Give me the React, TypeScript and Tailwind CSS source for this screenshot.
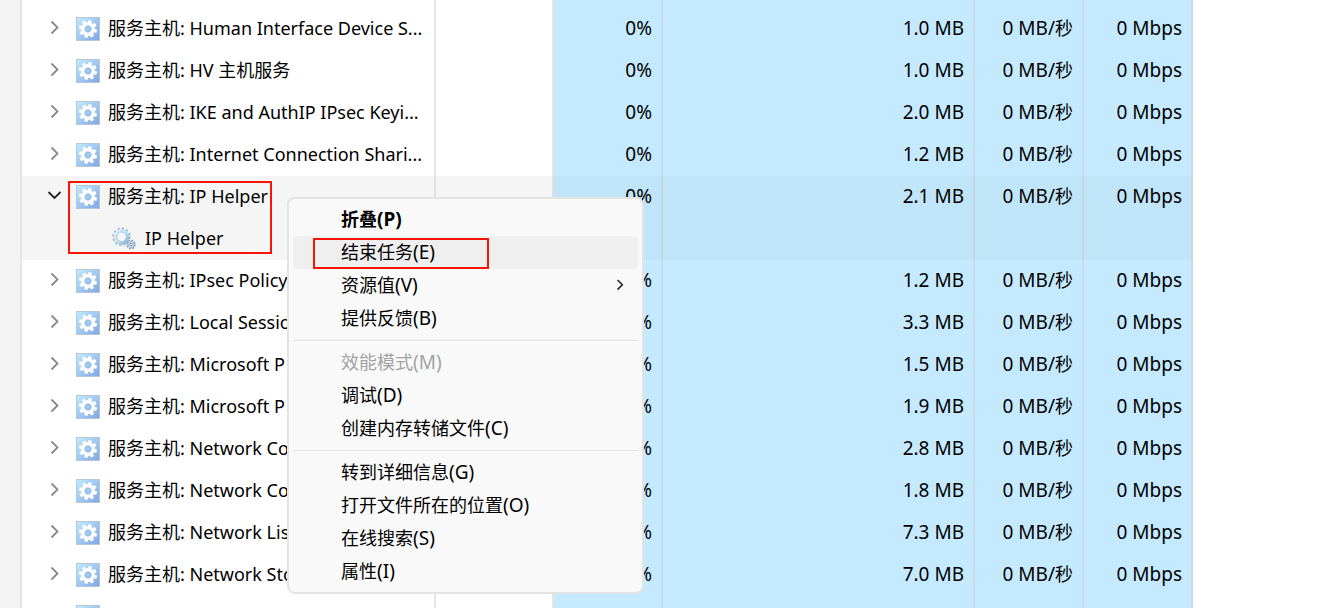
import { Fragment } from "react";
import type { ReactNode } from "react";

type Service = {
  name: string;
  memory: string;
  child?: string;
};

type MenuItem = {
  label: string;
  bold?: boolean;
  disabled?: boolean;
  active?: boolean;
  submenu?: boolean;
};

const services: Service[] = [
  { name: "服务主机: Human Interface Device S...", memory: "1.0 MB" },
  { name: "服务主机: HV 主机服务", memory: "1.0 MB" },
  { name: "服务主机: IKE and AuthIP IPsec Keyi...", memory: "2.0 MB" },
  { name: "服务主机: Internet Connection Shari...", memory: "1.2 MB" },
  { name: "服务主机: IP Helper", memory: "2.1 MB", child: "IP Helper" },
  { name: "服务主机: IPsec Policy", memory: "1.2 MB" },
  { name: "服务主机: Local Sessio", memory: "3.3 MB" },
  { name: "服务主机: Microsoft P", memory: "1.5 MB" },
  { name: "服务主机: Microsoft P", memory: "1.9 MB" },
  { name: "服务主机: Network Co", memory: "2.8 MB" },
  { name: "服务主机: Network Co", memory: "1.8 MB" },
  { name: "服务主机: Network Lis", memory: "7.3 MB" },
  { name: "服务主机: Network Sto", memory: "7.0 MB" },
];

const menuGroups: MenuItem[][] = [
  [
    { label: "折叠(P)", bold: true },
    { label: "结束任务(E)", active: true },
    { label: "资源值(V)", submenu: true },
    { label: "提供反馈(B)" },
  ],
  [
    { label: "效能模式(M)", disabled: true },
    { label: "调试(D)" },
    { label: "创建内存转储文件(C)" },
  ],
  [
    { label: "转到详细信息(G)" },
    { label: "打开文件所在的位置(O)" },
    { label: "在线搜索(S)" },
    { label: "属性(I)" },
  ],
];

// Chinese runs are set one pixel smaller than the latin text around them
function Mixed({ text }: { text: string }) {
  return (
    <>
      {text.split(/([\u4e00-\u9fff]+)/).map((part, i) =>
        i % 2 === 1 ? (
          <span key={i} className="text-[18px]">
            {part}
          </span>
        ) : (
          <Fragment key={i}>{part}</Fragment>
        ),
      )}
    </>
  );
}

function Chevron({ open }: { open?: boolean }) {
  return (
    <svg
      viewBox="0 0 24 24"
      className={`block size-6 ${open ? "text-[#222222]" : "text-[#8a8a8a]"}`}
      fill="none"
      stroke="currentColor"
      strokeWidth="1.8"
      aria-hidden="true"
    >
      <path d={open ? "M5.5 7 11.5 13 17.5 7" : "M8.5 4.5 14.5 10.5 8.5 16.5"} />
    </svg>
  );
}

const teeth = [0, 45, 90, 135, 180, 225, 270, 315];

function ServiceIcon() {
  return (
    <svg viewBox="0 0 24 24" className="block size-6 shrink-0" aria-hidden="true">
      <defs>
        <linearGradient id="tile" x1="0" y1="0" x2="1" y2="1">
          <stop offset="0" stopColor="#c0ecfd" />
          <stop offset="1" stopColor="#80a6e2" />
        </linearGradient>
      </defs>
      <rect x="0.5" y="0.5" width="23" height="23" fill="url(#tile)" stroke="#b4c8da" />
      <g transform="rotate(14 12 12)">
        <g fill="#ffffff">
          {teeth.map((a) => (
            <path key={a} d="M9.9 6.5 10.5 3H13.5L14.1 6.5Z" transform={`rotate(${a} 12 12)`} />
          ))}
        </g>
        <circle cx="12" cy="12" r="4.9" fill="none" stroke="#ffffff" strokeWidth="3.8" />
        <circle cx="12" cy="12" r="3.1" fill="none" stroke="#86b1dd" strokeWidth="0.9" />
      </g>
    </svg>
  );
}

function GearsIcon() {
  return (
    <svg viewBox="0 0 24 24" className="block size-6 shrink-0" aria-hidden="true">
      <defs>
        <linearGradient id="gear" x1="0" y1="0" x2="1" y2="1">
          <stop offset="0" stopColor="#e3eff8" />
          <stop offset="0.55" stopColor="#b9e2f9" />
          <stop offset="1" stopColor="#86abcb" />
        </linearGradient>
      </defs>
      <circle cx="9.5" cy="9.8" r="8.3" fill="none" stroke="#9bb4c9" strokeWidth="1.8" strokeDasharray="2.3 2.05" />
      <circle cx="9.5" cy="9.8" r="6.4" fill="none" stroke="url(#gear)" strokeWidth="3" />
      <circle cx="9.5" cy="9.8" r="4.8" fill="none" stroke="#9cb5c9" strokeWidth="0.7" />
      <circle cx="19" cy="17.5" r="4.1" fill="#dfeefa" stroke="#7089a0" strokeWidth="1.2" strokeDasharray="1.8 1.4" />
      <circle cx="19" cy="17.5" r="3" fill="#d5eafa" stroke="#93b0c9" strokeWidth="0.8" />
      <circle cx="19" cy="17.5" r="1.3" fill="#f5f5f5" stroke="#647f99" strokeWidth="0.8" />
    </svg>
  );
}

function Row({
  name,
  values,
  selected,
  short,
}: {
  name?: ReactNode;
  values: string[];
  selected?: boolean;
  short?: boolean;
}) {
  const height = short ? "h-2" : "h-[42px]";
  const plain = selected ? "bg-[#f5f5f5] border-[#e0e0e0]" : "bg-white border-[#e5e5e5]";
  const heat = selected ? "bg-[#c0e5f8] border-[#c1d7e3]" : "bg-[#c5eaff] border-[#c6dcea]";
  return (
    <tr className={height}>
      <td className={`relative border-r-2 p-0 text-[18px] ${plain}`}>{name}</td>
      <td className={`border-r-2 p-0 ${plain}`} />
      {values.map((value, i) => (
        <td key={i} className={`border-r-2 pt-0 pr-[9px] pb-0.5 pl-0 text-right ${heat}`}>
          <Mixed text={value} />
        </td>
      ))}
    </tr>
  );
}

function ProcessTable() {
  return (
    <table className="w-full table-fixed border-separate border-spacing-0 whitespace-nowrap">
      <colgroup>
        <col className="w-[414px]" />
        <col className="w-[118px]" />
        <col className="w-[109px]" />
        <col />
        <col className="w-[109px]" />
        <col className="w-[109px]" />
      </colgroup>
      <tbody>
        <Row short values={["", "", "", ""]} />
        {services.map((service, i) => {
          const open = Boolean(service.child);
          return (
            <Fragment key={i}>
              <Row
                selected={open}
                values={["0%", service.memory, "0 MB/秒", "0 Mbps"]}
                name={
                  <>
                    <div className="flex h-6 items-center pl-[21px]">
                      <button type="button" aria-expanded={open} aria-label={service.name}>
                        <Chevron open={open} />
                      </button>
                      <span className="ml-[9px]">
                        <ServiceIcon />
                      </span>
                      <span className="ml-2 pb-0.5">{service.name}</span>
                    </div>
                    {open && (
                      <div className="absolute top-[5px] left-[46px] z-10 h-[73px] w-[204px] border-2 border-[#fb1404]" />
                    )}
                  </>
                }
              />
              {service.child && (
                <Row
                  selected
                  values={["", "", "", ""]}
                  name={
                    <div className="flex h-6 items-center gap-[9px] pl-[90px]">
                      <GearsIcon />
                      <span className="pb-0.5">{service.child}</span>
                    </div>
                  }
                />
              )}
            </Fragment>
          );
        })}
        <Row
          values={["", "", "", ""]}
          name={
            <div className="pl-[54px]">
              <ServiceIcon />
            </div>
          }
        />
      </tbody>
    </table>
  );
}

function ContextMenu() {
  return (
    <div
      role="menu"
      className="absolute top-[197px] left-[287px] z-20 w-[357px] rounded-lg border-2 border-[#e3e3e3] bg-[#f9f9f9] p-1"
    >
      {menuGroups.map((group, g) => (
        <Fragment key={g}>
          {g > 0 && <hr className="my-[5px] border-t border-[#e3e3e3]" />}
          {group.map((item) => (
            <button
              key={item.label}
              type="button"
              role="menuitem"
              disabled={item.disabled}
              className={`relative flex h-[33px] w-full items-center justify-between rounded pr-[6px] pb-0.5 pl-12 text-left ${
                item.active ? "bg-[#efefef]" : ""
              } ${item.bold ? "font-bold" : ""} ${item.disabled ? "text-[#a3a3a3]" : ""}`}
            >
              <span>
                <Mixed text={item.label} />
              </span>
              {item.submenu && (
                <svg
                  viewBox="0 0 24 24"
                  className="size-6"
                  fill="none"
                  stroke="#1c2a38"
                  strokeWidth="1.6"
                  aria-hidden="true"
                >
                  <path d="M9.5 7 14.3 11.8 9.5 16.6" />
                </svg>
              )}
              {item.active && (
                <span className="absolute top-[2px] left-5 h-[31px] w-44 border-2 border-[#fb1404]" />
              )}
            </button>
          ))}
        </Fragment>
      ))}
    </div>
  );
}

export default function App() {
  return (
    <div className="relative flex h-screen overflow-hidden bg-white font-['Noto_Sans','Noto_Sans_CJK_SC',sans-serif] text-[19px] leading-6 text-black">
      <aside className="w-[22px] shrink-0 border-r-2 border-[#e5e5e5] bg-[#f3f3f3]" />
      <main className="min-w-0 flex-1 pr-[130px]">
        <ProcessTable />
      </main>
      <ContextMenu />
    </div>
  );
}
